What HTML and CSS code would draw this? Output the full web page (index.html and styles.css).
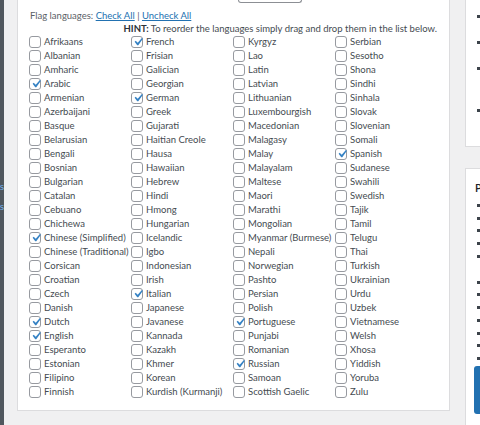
FILE: index.html
```html
<!DOCTYPE html>
<html>
<head>
<meta charset="utf-8">
<link rel="stylesheet" href="styles.css">
</head>
<body>
<div class="page">
  <div class="adminmenu">
    <div class="menu-inner">
      <div class="menu-item">Languages</div>
      <div class="menu-item">Settings</div>
    </div>
  </div>
  <div class="main">
    <div class="panel">
      <div class="topbtn"></div>
      <p class="flag">Flag languages: <a href="#">Check All</a> | <a href="#">Uncheck All</a></p>
      <p class="hint"><b>HINT:</b> To reorder the languages simply drag and drop them in the list below.</p>
      <div class="langs" id="langs"></div>
    </div>
  </div>
  <div class="side">
    <div class="box box1">
      <span class="dot g1"></span>
      <span class="dot g2"></span>
      <span class="dot g2"></span>
      <span class="dot g3"></span>
    </div>
    <div class="box box2">
      <h3 class="box-title">P</h3>
      <span class="dot h1"></span>
      <span class="dot"></span>
      <span class="dot"></span>
      <span class="dot"></span>
      <span class="dot"></span>
      <span class="dot h2"></span>
      <span class="dot"></span>
      <span class="dot"></span>
      <span class="dot"></span>
      <span class="dot"></span>
      <span class="dot"></span>
      <span class="dot"></span>
      <div class="btn"></div>
    </div>
  </div>
</div>
<script src="script.js"></script>
</body>
</html>
```

FILE: script.js
```js
var langs = ["Afrikaans","Albanian","Amharic","Arabic","Armenian","Azerbaijani","Basque","Belarusian","Bengali","Bosnian","Bulgarian","Catalan","Cebuano","Chichewa","Chinese (Simplified)","Chinese (Traditional)","Corsican","Croatian","Czech","Danish","Dutch","English","Esperanto","Estonian","Filipino","Finnish",
"French","Frisian","Galician","Georgian","German","Greek","Gujarati","Haitian Creole","Hausa","Hawaiian","Hebrew","Hindi","Hmong","Hungarian","Icelandic","Igbo","Indonesian","Irish","Italian","Japanese","Javanese","Kannada","Kazakh","Khmer","Korean","Kurdish (Kurmanji)",
"Kyrgyz","Lao","Latin","Latvian","Lithuanian","Luxembourgish","Macedonian","Malagasy","Malay","Malayalam","Maltese","Maori","Marathi","Mongolian","Myanmar (Burmese)","Nepali","Norwegian","Pashto","Persian","Polish","Portuguese","Punjabi","Romanian","Russian","Samoan","Scottish Gaelic",
"Serbian","Sesotho","Shona","Sindhi","Sinhala","Slovak","Slovenian","Somali","Spanish","Sudanese","Swahili","Swedish","Tajik","Tamil","Telugu","Thai","Turkish","Ukrainian","Urdu","Uzbek","Vietnamese","Welsh","Xhosa","Yiddish","Yoruba","Zulu"];
var checked = {"Arabic":1,"Chinese (Simplified)":1,"Dutch":1,"English":1,"French":1,"German":1,"Italian":1,"Portuguese":1,"Russian":1,"Spanish":1};
var box = document.getElementById("langs");
var html = "";
for (var i = 0; i < langs.length; i++) {
  var n = langs[i];
  var on = checked[n];
  html += '<label class="lang"><span class="cb">' +
    (on ? '<svg class="tick" viewBox="0 0 20 20"><path d="M14.83 4.89l1.34.94-5.81 8.38H9.02L5.78 9.67l1.34-1.25 2.57 2.4z"/></svg>' : '') +
    '</span><span class="name">' + n + '</span></label>';
}
box.innerHTML = html;
```

FILE: styles.css
```css
* { box-sizing: border-box; }
html, body {
  margin: 0;
  padding: 0;
  background: #f0f0f1;
  overflow: hidden;
}
body {
  font-family: "Lato", "Noto Sans", sans-serif;
  font-size: 9.5px;
  color: #454b51;
}
.page {
  display: flex;
  width: 480px;
  height: 425px;
  overflow: hidden;
}
.adminmenu {
  flex: none;
  width: 4px;
  height: 425px;
  background: #50575e;
  overflow: hidden;
}
.menu-inner {
  width: 120px;
  margin-left: -116px;
  text-align: right;
  padding-top: 176px;
  color: #72aee6;
  font-size: 10px;
  line-height: 20px;
}
.main {
  flex: none;
  width: 446px;
  padding-left: 13px;
}
.panel {
  width: 433px;
  height: 411px;
  background: #fff;
  border: 1px solid #dcdcde;
  border-top: none;
  padding: 0 12px 0 11px;
}
.topbtn {
  width: 64px;
  height: 3px;
  margin-left: 209px;
  border: 1px solid #8c8f94;
  border-top: none;
  border-radius: 0 0 3px 3px;
}
.flag {
  margin: 6px 0 0 1px;
  line-height: 13px;
  color: #5b6167;
}
.flag a {
  color: #2271b1;
}
.hint {
  margin: 0;
  line-height: 13px;
  text-align: right;
  width: 408px;
}
.hint b {
  font-weight: 700;
  color: #2c3338;
}
.langs {
  display: grid;
  grid-auto-flow: column;
  grid-template-rows: repeat(26, 14px);
  grid-template-columns: repeat(4, 102px);
}
.lang {
  display: flex;
  align-items: center;
  white-space: nowrap;
}
.cb {
  flex: none;
  width: 12px;
  height: 12px;
  border: 1px solid #979aa0;
  border-radius: 3px;
  background: #fff;
  margin-right: 3px;
  position: relative;
}
.tick {
  position: absolute;
  left: -2px;
  top: -3px;
  width: 16px;
  height: 16px;
  fill: #3582c4;
}
.name {
  line-height: 14px;
}
.side {
  flex: none;
  margin-left: 15px;
  width: 15px;
  overflow: hidden;
}
.box {
  width: 15px;
  background: #fff;
  border-left: 1px solid #dcdcde;
  display: flex;
  flex-direction: column;
  padding-left: 11px;
}
.box1 {
  height: 147px;
  border-bottom: 1px solid #dcdcde;
}
.box2 {
  margin-top: 21px;
  height: 260px;
  border-top: 1px solid #dcdcde;
  padding-left: 9px;
}
.box-title {
  margin: 12px 0 0 0;
  font-size: 11px;
  line-height: 14px;
  font-weight: 600;
  color: #1d2327;
  white-space: nowrap;
}
.dot {
  display: block;
  flex: none;
  width: 3px;
  height: 3px;
  background: #3c434a;
  margin-top: 9.7px;
  margin-left: 2px;
}
.box1 .dot { margin-left: 0; }
.g1 { margin-top: 15px; }
.g2 { margin-top: 23px; }
.g3 { margin-top: 39px; }
.h1 { margin-top: 9px; }
.h2 { margin-top: 23px; }
.btn {
  flex: none;
  margin-top: 6px;
  margin-left: -1px;
  width: 30px;
  height: 48px;
  background: #2271b1;
  border-radius: 3px;
}
```
